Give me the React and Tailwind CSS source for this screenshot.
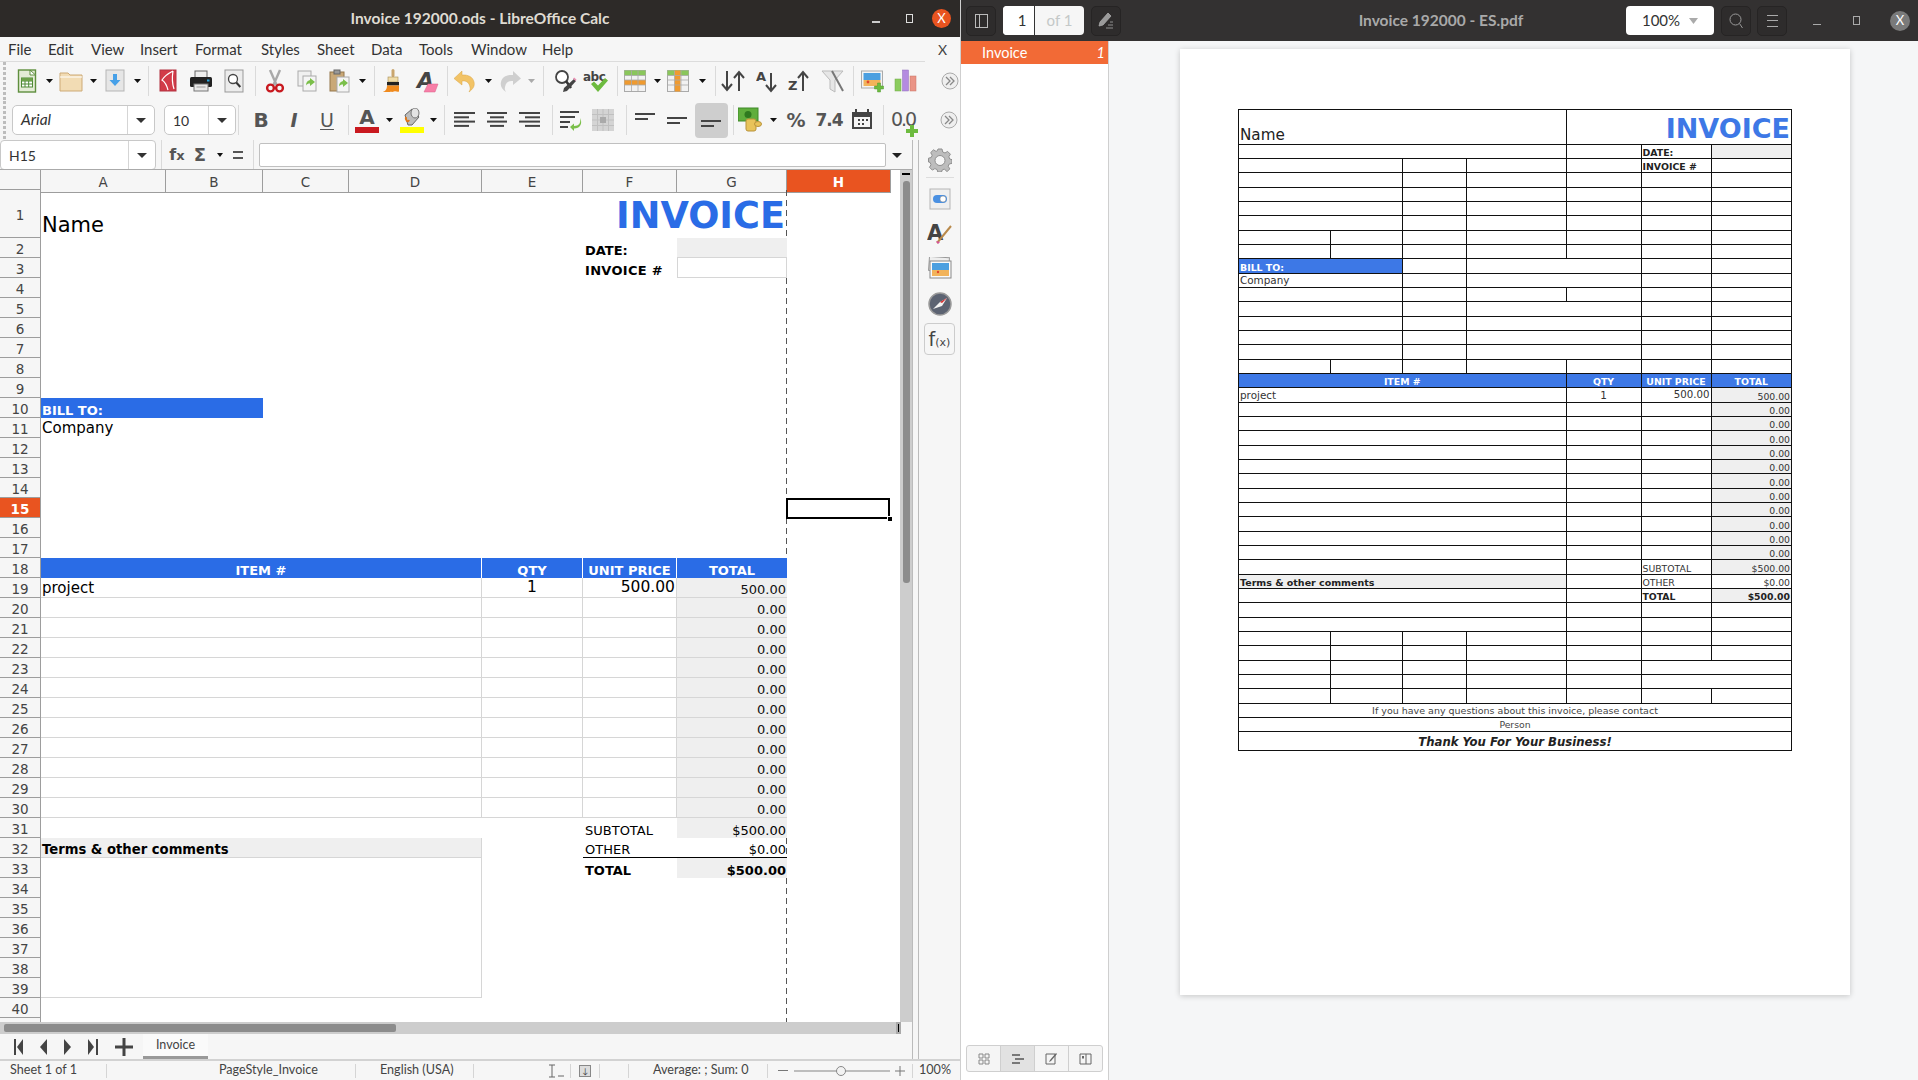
import React from "react";

const S = ({ w, children, className = "" }) => (
  <div className={`${w} shrink-0 flex items-center justify-center ${className}`}>{children}</div>
);
const Sep = ({ w }) => (
  <S w={w}>
    <div className="w-px h-[30px] bg-[#dadada]" />
  </S>
);
const Drop = ({ light }) => (
  <svg width="7" height="4" viewBox="0 0 7 4" className="shrink-0">
    <path d="M0 0h7L3.5 4z" fill={light ? "#aaa" : "#111"} />
  </svg>
);
const DropS = ({ w, light }) => (
  <S w={w}>
    <Drop light={light} />
  </S>
);
const Ic = ({ s = 24, children }) => (
  <svg width={s} height={s} viewBox="0 0 24 24" className="shrink-0">
    {children}
  </svg>
);
const Plus = () => <path d="M16.5 14h3v3h3v3h-3v3h-3v-3h-3v-3h3z" fill="#6dbb3f" stroke="#4f9a2c" strokeWidth=".5" />;

const Grip = () => (
  <div className="flex flex-col gap-[2px]">
    {[0, 1, 2, 3, 4, 5, 6, 7].map((i) => (
      <div key={i} className="w-[3px] h-[3px] bg-[#bdbdbd]" />
    ))}
  </div>
);

const NewCalc = () => (
  <Ic>
    <rect x="3.5" y="1" width="17" height="22" fill="#e4ecd6" stroke="#5f8f3e" strokeWidth="1.4" />
    <path d="M15 1l5.5 5H15z" fill="#fff" stroke="#5f8f3e" />
    <rect x="6.5" y="9" width="11" height="9" fill="#fff" stroke="#4e8a35" />
    <path d="M6.5 12h11M6.5 15h11M10 9v9M13.7 9v9" stroke="#4e8a35" />
    <rect x="6.5" y="9" width="11" height="3" fill="#6ea24b" />
  </Ic>
);
const Folder = () => (
  <Ic>
    <path d="M1 4h8l2 2h12v16H1z" fill="#f2dcb4" stroke="#cdaa76" />
    <path d="M1 8h22" stroke="#fff" />
  </Ic>
);
const Save = () => (
  <Ic>
    <rect x="3" y="1" width="18" height="21" fill="#e6e6e6" stroke="#b5b5b5" />
    <path d="M10 5h4v6h3.5L12 17l-5.5-6H10z" fill="#46a0e8" />
  </Ic>
);
const Pdf = () => (
  <Ic>
    <rect x="4" y="1" width="16" height="21" fill="#d23b48" stroke="#b23340" />
    <path d="M17 2c-4 2-9 6-11 9 3 2 5 6 6 10M17 2c-1 6-1 12 1 18" fill="none" stroke="#fff" strokeWidth="1.2" />
  </Ic>
);
const Printer = () => (
  <Ic>
    <rect x="6" y="2" width="12" height="7" fill="#eee" stroke="#666" />
    <rect x="1" y="8" width="22" height="10" rx="1.5" fill="#222" />
    <rect x="18" y="10.5" width="2.5" height="2" fill="#2aa6e0" />
    <rect x="5" y="15" width="14" height="7" fill="#e8e8e8" stroke="#777" />
    <path d="M7.5 18h9" stroke="#999" />
  </Ic>
);
const Preview = () => (
  <Ic>
    <rect x="3" y="1" width="18" height="22" fill="#ececec" stroke="#999" />
    <circle cx="11" cy="10" r="4.5" fill="#fff" stroke="#444" strokeWidth="1.3" />
    <path d="M14.3 13.5l4 4.5" stroke="#333" strokeWidth="2" />
  </Ic>
);
const Cut = () => (
  <Ic>
    <path d="M7 1l7 16M17 1l-7 16" stroke="#a9a9a9" strokeWidth="2.4" />
    <circle cx="7.5" cy="19" r="3.4" fill="none" stroke="#c8191f" strokeWidth="2.4" />
    <circle cx="16.5" cy="19" r="3.4" fill="none" stroke="#c8191f" strokeWidth="2.4" />
  </Ic>
);
const Clone = () => (
  <Ic>
    <rect x="3" y="2" width="13" height="15" fill="#f0f0f0" stroke="#aaa" />
    <rect x="8" y="7" width="13" height="15" fill="#f5f5f5" stroke="#aaa" />
    <path d="M15 9l5 4-5 4v-2.5c-2 0-3 .5-4 2 0-3 1.500-5 4-5.500z" fill="#7bbf4a" />
  </Ic>
);
const Paste = () => (
  <Ic>
    <rect x="2" y="3" width="14" height="19" fill="#c9a877" stroke="#94764a" />
    <rect x="6" y="1" width="6" height="4" fill="#999" stroke="#666" />
    <rect x="9" y="8" width="12" height="15" fill="#f5f5f5" stroke="#aaa" />
    <path d="M15 10l5 4-5 4v-2.500c-2 0-3 .5-4 2 0-3 1.500-5 4-5.500z" fill="#7bbf4a" />
  </Ic>
);
const Brush = () => (
  <Ic>
    <rect x="10.500" y="0" width="3" height="8" rx="1.500" fill="#c9a56d" />
    <rect x="7" y="8" width="10" height="5" fill="#f0dca8" stroke="#a58a52" strokeWidth=".6" />
    <rect x="6" y="13" width="12" height="3.500" fill="#222" />
    <path d="M6 16.500h12v6c-2 1-3-1-5 0-2 1-3 0-4 .5H2c2-1 4-2 4-6.500z" fill="#f08a1d" />
  </Ic>
);
const Clear = () => (
  <Ic>
    <text x="2" y="19" fontFamily="'DejaVu Sans'" fontWeight="700" fontStyle="italic" fontSize="22" fill="#444">A</text>
    <path d="M13 15h10l-3 8H9z" fill="#f77fa8" stroke="#d8608a" strokeWidth=".5" />
  </Ic>
);
const Undo = ({ c = "#f2c366", e = "#d9a544" }) => (
  <Ic>
    <path d="M9 2L1 9.500 9 16v-4c4-.5 7 1 8 6 .5 2 0 3-1 5 4-3 6-6 5-10-1-5-6-7.500-12-7z" fill={c} stroke={e} strokeWidth=".5" />
  </Ic>
);
const Redo = () => (
  <Ic>
    <path d="M15 2l8 7.500L15 16v-4c-4-.5-7 1-8 6-.5 2 0 3 1 5-4-3-6-6-5-10 1-5 6-7.500 12-7z" fill="#cfcfcf" />
  </Ic>
);
const Find = () => (
  <Ic>
    <circle cx="9" cy="8" r="6" fill="#fff" stroke="#444" strokeWidth="1.8" />
    <path d="M13 12l5 7" stroke="#333" strokeWidth="2.400" />
    <path d="M21 10l2 2-9 10-4 1 1-4z" fill="#444" />
    <path d="M20 9.500l2.500 2.500 1-1.200-2.300-2.300z" fill="#e88bb0" />
  </Ic>
);
const Abc = () => (
  <svg width="28" height="26" viewBox="0 0 28 26" className="shrink-0">
    <text x="0" y="13" fontFamily="'DejaVu Sans'" fontWeight="700" fontSize="12" letterSpacing="-.5" fill="#444">abc</text>
    <path d="M8 16l3-2.500 4 4 7-7.500 3 2.500L15 24z" fill="#6dbb3f" />
  </svg>
);
const Table = ({ col }) => (
  <Ic>
    <rect x="1.500" y="1.500" width="21" height="21" fill="#f2f2f2" stroke="#aaa" />
    <rect x="1.500" y="1.500" width="21" height="5" fill="#8ac65b" />
    {col ? <rect x="8.500" y="1.500" width="6" height="21" fill="#ef9a2f" /> : <rect x="1.500" y="11" width="21" height="5" fill="#ef9a2f" />}
    <path d="M1.500 6.500h21M1.500 11h21M1.500 16h21M8.500 1.500v21M15 1.500v21" stroke="#aaa" strokeWidth=".8" fill="none" />
  </Ic>
);
const Sort = () => (
  <Ic>
    <path d="M6 2v19M1 15l5 6 5-6M18 22V3M13 9l5-6 5 6" fill="none" stroke="#444" strokeWidth="2" />
  </Ic>
);
const Az = () => (
  <Ic>
    <text x="0" y="12" fontFamily="'DejaVu Sans'" fontWeight="700" fontSize="13" fill="#444">A</text>
    <path d="M15 4v18M10 16l5 6 5-6" fill="none" stroke="#444" strokeWidth="2" />
  </Ic>
);
const Za = () => (
  <Ic>
    <text x="0" y="21" fontFamily="'DejaVu Sans'" fontWeight="700" fontSize="13" fill="#444">Z</text>
    <path d="M15 22V3M10 9l5-6 5 6" fill="none" stroke="#444" strokeWidth="2" />
  </Ic>
);
const Filter = () => (
  <Ic>
    <path d="M1 2h21l-8 9v12l-5-3v-9z" fill="#e6e6e6" stroke="#bbb" />
    <path d="M11 2l11 20" stroke="#777" strokeWidth="2" />
  </Ic>
);
const Img = () => (
  <Ic>
    <rect x="0.500" y="2" width="21" height="17" fill="#f4f4f4" stroke="#aaa" />
    <rect x="2.500" y="4" width="17" height="7" fill="#4b9fe0" />
    <rect x="2.500" y="11" width="17" height="6" fill="#f2b35a" />
    <circle cx="7" cy="13" r="1.400" fill="#e2452b" />
    <Plus />
  </Ic>
);
const Chart = () => (
  <Ic>
    <rect x="1" y="10" width="6" height="12" fill="#8ccc5e" stroke="#6fa947" strokeWidth=".5" />
    <rect x="8.500" y="1" width="6" height="21" fill="#b48be0" stroke="#8f6cbb" strokeWidth=".5" />
    <rect x="16" y="7" width="6" height="15" fill="#ea9486" stroke="#c77366" strokeWidth=".5" />
  </Ic>
);
const More = () => (
  <svg width="18" height="18" viewBox="0 0 18 18" className="shrink-0">
    <circle cx="9" cy="9" r="8" fill="#efefef" stroke="#aaa" />
    <path d="M5 5l4 4-4 4M9 5l4 4-4 4" fill="none" stroke="#888" strokeWidth="1.300" />
  </svg>
);
const Lines = ({ a }) => {
  const rows = a === "l" ? [[1, 21], [1, 15], [1, 21], [1, 15]] : a === "c" ? [[2, 20], [5, 14], [2, 20], [5, 14]] : [[1, 21], [7, 15], [1, 21], [7, 15]];
  return (
    <svg width="22" height="16" viewBox="0 0 22 16" className="shrink-0">
      {rows.map((r, i) => (
        <rect key={i} x={r[0] - 1} y={i * 4.300} width={r[1]} height="2" fill="#444" />
      ))}
    </svg>
  );
};
const Wrap = () => (
  <Ic>
    <path d="M1 4h19M1 9h15M1 14h10M1 19h8" stroke="#444" strokeWidth="2" />
    <path d="M21 10c1 5-1 8-6 8v-2.500L11 19l4 4v-2.500c6 0 9-5 6-10.500z" fill="#7bbf4a" />
  </Ic>
);
const Merge = () => (
  <Ic>
    <rect x="1" y="1" width="22" height="22" fill="#d4d4d4" />
    <path d="M1 6.500h22M1 12h22M1 17.500h22M6.500 1v22M12 1v22M17.500 1v22" stroke="#c0c0c0" />
    <rect x="9" y="9" width="6" height="6" fill="#aaa" />
  </Ic>
);
const VAlign = ({ y }) => (
  <svg width="20" height="20" viewBox="0 0 20 20" className="shrink-0">
    <rect x="0" y={y} width="20" height="2" fill="#444" />
    <rect x="0" y={y + 5} width="13" height="2" fill="#444" />
  </svg>
);
const Money = () => (
  <svg width="24" height="26" viewBox="0 0 24 26" className="shrink-0">
    <rect x="0" y="1" width="20" height="13" fill="#5fae3c" stroke="#3f8a28" />
    <circle cx="10" cy="7.500" r="3.500" fill="#2f7a1f" />
    <rect x="8" y="12" width="10" height="12" rx="2" fill="#e8c35a" stroke="#b8923a" />
    <ellipse cx="20" cy="17" rx="3.500" ry="2.500" fill="#e8c35a" stroke="#b8923a" />
  </svg>
);
const Cal = () => (
  <svg width="22" height="22" viewBox="0 0 22 22" className="shrink-0">
    <rect x="1" y="3" width="20" height="17" fill="#444" />
    <rect x="3" y="8" width="16" height="10" fill="#f5f5f5" />
    <path d="M5 0v5M17 0v5" stroke="#444" strokeWidth="2" />
    <path d="M7 11h2M11 11h2M15 11h2M7 15h2M11 15h2" stroke="#444" strokeWidth="2" />
  </svg>
);
const Gear = () => (
  <svg width="24" height="24" viewBox="0 0 24 24" fill="#bdbdbd" stroke="#8f8f8f" className="shrink-0">
    <path d="M10 1h4l.7 3 2.300 1 2.600-1.600 2.800 2.800L20.800 8.800l1 2.200 2.200.7v3.600l-2.800.7-1 2.300 1.600 2.600-2.800 2.800L16.400 21l-2.200 1-.7 2h-3.700l-.7-2.400-2.200-1-2.600 1.500-2.800-2.800 1.500-2.600-1-2.300L.5 14v-3.800l2.700-.7 1-2.300L2.700 4.600l2.800-2.800L8.100 3.400l1.200-.6z" />
    <circle cx="12" cy="12.500" r="5" fill="#f6f6f6" />
  </svg>
);
const Toggle = () => (
  <svg width="22" height="22" viewBox="0 0 22 22" className="shrink-0">
    <rect x="1" y="1" width="20" height="20" fill="#efefef" stroke="#b5b5b5" />
    <rect x="4" y="7" width="14" height="8" rx="4" fill="#4a90e2" />
    <circle cx="14" cy="11" r="3" fill="#fff" stroke="#888" strokeWidth=".5" />
  </svg>
);
const StyleA = () => (
  <svg width="26" height="24" viewBox="0 0 26 24" className="shrink-0">
    <text x="0" y="19" fontFamily="'DejaVu Sans'" fontWeight="700" fontSize="21" fill="#444">A</text>
    <path d="M24 5L10 22" stroke="#b98a4c" strokeWidth="2" />
    <path d="M9 20l4 1-2 2z" fill="#d94da0" />
  </svg>
);
const Gallery = () => (
  <svg width="24" height="22" viewBox="0 0 24 22" className="shrink-0">
    <rect x="1" y="0" width="20" height="14" fill="#eee" stroke="#999" transform="rotate(4 10 7)" />
    <rect x="2" y="4" width="21" height="17" fill="#fafafa" stroke="#888" />
    <rect x="4" y="6" width="17" height="7" fill="#4b9fe0" />
    <rect x="4" y="13" width="17" height="6" fill="#f2b35a" />
    <circle cx="10" cy="15" r="1.200" fill="#e2452b" />
  </svg>
);
const Compass = () => (
  <svg width="24" height="24" viewBox="0 0 24 24" className="shrink-0">
    <circle cx="12" cy="12" r="11" fill="#5c6372" stroke="#9a9a9a" strokeWidth="1.500" />
    <path d="M5 17l7-7 7-4-5 8z" fill="#f2f2f2" />
    <path d="M12 10l7-4-5 5z" fill="#d82b2b" />
  </svg>
);

const Bar = ({ children }) => <div className="flex w-full items-center h-full">{children}</div>;

const Toolbar1 = () => (
  <div className="h-10 shrink-0">
    <Bar>
      <S w="w-[8px]"><Grip /></S>
      <S w="w-[38px]"><NewCalc /></S>
      <DropS w="w-[6px]" />
      <S w="w-[38px]"><Folder /></S>
      <DropS w="w-[6px]" />
      <S w="w-[38px]"><Save /></S>
      <DropS w="w-[6px]" />
      <Sep w="w-[16px]" />
      <S w="w-[24px]"><Pdf /></S>
      <S w="w-[42px]"><Printer /></S>
      <S w="w-[24px]"><Preview /></S>
      <Sep w="w-[18px]" />
      <S w="w-[22px]"><Cut /></S>
      <S w="w-[42px]"><Clone /></S>
      <S w="w-[24px]"><Paste /></S>
      <DropS w="w-[20px]" />
      <Sep w="w-[4px]" />
      <S w="w-[34px]"><Brush /></S>
      <S w="w-[34px]"><Clear /></S>
      <Sep w="w-[6px]" />
      <S w="w-[30px]"><Undo /></S>
      <DropS w="w-[16px]" />
      <S w="w-[28px]"><Redo /></S>
      <DropS w="w-[14px]" light />
      <Sep w="w-[10px]" />
      <S w="w-[34px]"><Find /></S>
      <S w="w-[30px]"><Abc /></S>
      <Sep w="w-[10px]" />
      <S w="w-[26px]"><Table /></S>
      <DropS w="w-[18px]" />
      <S w="w-[24px]"><Table col /></S>
      <DropS w="w-[24px]" />
      <Sep w="w-[2px]" />
      <S w="w-[34px]"><Sort /></S>
      <S w="w-[36px]"><Az /></S>
      <S w="w-[28px]"><Za /></S>
      <S w="w-[38px]"><Filter /></S>
      <Sep w="w-[2px]" />
      <S w="w-[38px]"><Img /></S>
      <S w="w-[28px]"><Chart /></S>
      <S w="w-[41px]" className="justify-end pr-[2px]"><More /></S>
    </Bar>
  </div>
);

const TextIcon = ({ children, className = "" }) => (
  <span className={`font-['DejaVu_Sans',sans-serif] font-bold text-[#555] leading-none ${className}`}>{children}</span>
);

const Combo = ({ w, split, children, italic }) => (
  <div className={`${w} h-[30px] shrink-0 bg-white border border-[#c8c8c8] rounded-[5px] flex items-center text-[#333] ${italic ? "text-[15.5px]" : "text-[14px]"}`}>
    <div className={`flex-1 pl-2 ${italic ? "italic" : ""}`}>{children}</div>
    <div className={`${split} h-full border-l border-[#d5d5d5] flex items-center justify-center`}>
      <svg width="10" height="5" viewBox="0 0 10 5"><path d="M0 0h10L5 5z" fill="#333" /></svg>
    </div>
  </div>
);

const Toolbar2 = () => (
  <div className="h-[39px] shrink-0 pb-[1px]">
    <Bar>
      <S w="w-[8px]"><Grip /></S>
      <div className="w-1 shrink-0" />
      <Combo w="w-[143px]" split="w-[27px]" italic>Arial</Combo>
      <div className="w-[9px] shrink-0" />
      <Combo w="w-[72px]" split="w-[27px]">10</Combo>
      <Sep w="w-[5px]" />
      <S w="w-[40px]"><TextIcon className="text-[20px]">B</TextIcon></S>
      <S w="w-[26px]"><TextIcon className="text-[19px] italic">I</TextIcon></S>
      <S w="w-[40px]"><TextIcon className="text-[19px] font-normal underline underline-offset-2">U</TextIcon></S>
      <Sep w="w-[2px]" />
      <S w="w-[36px]">
        <div className="flex flex-col items-center w-6">
          <TextIcon className="text-[20px] text-[#444]">A</TextIcon>
          <div className="w-6 h-[6px] bg-[#c9191f]" />
        </div>
      </S>
      <DropS w="w-[8px]" />
      <S w="w-[38px]">
        <div className="flex flex-col items-center w-6">
          <svg width="22" height="19" viewBox="0 0 22 19">
            <path d="M4 7l7-6 7 8-7 8H7z" fill="#bdbdbd" stroke="#666" />
            <ellipse cx="14" cy="5" rx="4" ry="5" fill="#e4e4e4" stroke="#777" />
            <path d="M5 9c-1 3 2 6 3 3" stroke="#e0761a" strokeWidth="2" fill="none" />
          </svg>
          <div className="w-6 h-[6px] bg-[#ffff00]" />
        </div>
      </S>
      <DropS w="w-[4px]" />
      <Sep w="w-[18px]" />
      <S w="w-[24px]"><Lines a="l" /></S>
      <S w="w-[40px]"><Lines a="c" /></S>
      <S w="w-[26px]"><Lines a="r" /></S>
      <Sep w="w-[18px]" />
      <S w="w-[20px]"><Wrap /></S>
      <S w="w-[44px]"><Merge /></S>
      <Sep w="w-[2px]" />
      <S w="w-[36px]"><VAlign y={3} /></S>
      <S w="w-[28px]"><VAlign y={7} /></S>
      <S w="w-[40px]">
        <div className="w-[33px] h-[35px] rounded-[4px] bg-[#cecece] flex items-center justify-center">
          <VAlign y={10} />
        </div>
      </S>
      <Sep w="w-[4px]" />
      <S w="w-[30px]"><Money /></S>
      <DropS w="w-[16px]" />
      <S w="w-[30px]"><TextIcon className="text-[19px] text-[#444]">%</TextIcon></S>
      <S w="w-[36px]"><TextIcon className="text-[17px] text-[#444] tracking-[-1px]">7.4</TextIcon></S>
      <S w="w-[30px]"><Cal /></S>
      <Sep w="w-[12px]" />
      <S w="w-[28px]">
        <div className="relative">
          <TextIcon className="text-[19px] font-normal text-[#444] tracking-[-2px]">0.0</TextIcon>
          <svg width="12" height="12" viewBox="0 0 12 12" className="absolute -right-[3px] -bottom-[5px]">
            <path d="M4 0h4v4h4v4H8v4H4V8H0V4h4z" fill="#6dbb3f" />
          </svg>
        </div>
      </S>
      <div className="flex-1 flex justify-end pr-[2px]"><More /></div>
    </Bar>
  </div>
);

const FormulaRow = () => (
  <div className="h-[30px] shrink-0 flex items-center">
    <div className="w-[156px] h-[30px] shrink-0 bg-white border border-[#c8c8c8] rounded-[4px] flex items-center text-[14px] text-[#333]">
      <div className="flex-1 pl-2">H15</div>
      <div className="w-[27px] h-full border-l border-[#d5d5d5] flex items-center justify-center">
        <svg width="10" height="5" viewBox="0 0 10 5"><path d="M0 0h10L5 5z" fill="#333" /></svg>
      </div>
    </div>
    <Sep w="w-[10px]" />
    <S w="w-[22px]"><TextIcon className="text-[16px] text-[#444]">f<span className="text-[13px]">x</span></TextIcon></S>
    <S w="w-[24px]"><TextIcon className="text-[18px] text-[#444]">Σ</TextIcon></S>
    <S w="w-[16px]"><svg width="6" height="4" viewBox="0 0 6 4"><path d="M0 0h6L3 4z" fill="#111" /></svg></S>
    <S w="w-[20px]"><div className="w-[10px] h-[8px] border-y-2 border-[#555]" /></S>
    <Sep w="w-[10px]" />
    <div className="w-[627px] h-6 shrink-0 ml-[1px] bg-white border border-[#c0c0c0] rounded-[2px]" />
    <S w="w-[22px]">
      <svg width="10" height="5" viewBox="0 0 10 5"><path d="M0 0h10L5 5z" fill="#222" /></svg>
    </S>
  </div>
);

const COLS = "grid-cols-[125px_97px_86px_133px_101px_94px_110px_104px]";
const Dj = "font-['DejaVu_Sans',sans-serif]";

const ColHead = ({ on, children }) => (
  <div
    className={`flex items-center justify-center pt-[2px] border-r border-b border-[#9d9d9d] text-[13.5px] ${
      on ? "bg-[#e95420] text-white font-bold" : "bg-[#f6f6f6] text-[#444]"
    }`}
  >
    {children}
  </div>
);

const RowHead = ({ n, tall }) => (
  <div
    className={`w-[41px] shrink-0 flex items-center justify-center pt-[4px] border-r border-b border-[#9d9d9d] text-[13.5px] ${tall ? "h-12" : "h-5"} ${
      n === 15 ? "bg-[#e95420] text-white font-bold" : "bg-[#f6f6f6] text-[#444]"
    }`}
  >
    {n}
  </div>
);

const SheetRow = ({ n, tall, children }) => (
  <div className="flex">
    <RowHead n={n} tall={tall} />
    <div className={`grid ${COLS} w-[850px] text-black ${tall ? "h-12" : "h-5"}`}>{children}</div>
  </div>
);

const Cell = ({ className = "", children }) => (
  <div className={`flex overflow-hidden whitespace-nowrap ${className.includes("items-end") ? "leading-none pb-[1px]" : ""} ${className}`}>{children}</div>
);

const ITEM_ROWS = Array.from({ length: 11 }, (_, i) => i + 20);
const BLANK_A = [4, 5, 6, 7, 8, 9];
const BLANK_B = [12, 13, 14, 15, 16, 17];

const grid = "border-b border-r border-[#d6d6d6]";

const Sheet = () => (
  <div className={`relative h-[852px] w-[901px] bg-white overflow-hidden ${Dj}`}>
    <div className="flex h-5">
      <div className="w-[41px] shrink-0 bg-[#f6f6f6] border-r border-b border-[#9d9d9d]" />
      <div className={`grid ${COLS} w-[850px]`}>
        {["A", "B", "C", "D", "E", "F", "G"].map((c) => (
          <ColHead key={c}>{c}</ColHead>
        ))}
        <ColHead on>H</ColHead>
      </div>
    </div>

    <SheetRow n={1} tall>
      <Cell className="col-span-4 items-end pl-[1px] pb-[2px] text-[21px]">Name</Cell>
      <Cell className="col-span-3 justify-end items-center pt-[5px] pr-[2px] text-[36.7px] font-bold text-[#2a6ce6] leading-none">INVOICE</Cell>
    </SheetRow>
    <SheetRow n={2}>
      <Cell className="col-span-5" />
      <Cell className="items-end pl-[2px] text-[13px] font-bold">DATE:</Cell>
      <Cell className="bg-[#efefef] border-b border-[#d6d6d6]" />
    </SheetRow>
    <SheetRow n={3}>
      <Cell className="col-span-5" />
      <Cell className="items-end pl-[2px] text-[13px] font-bold tracking-[.3px]">INVOICE #</Cell>
      <Cell className="border border-t-0 border-[#d6d6d6]" />
    </SheetRow>
    {BLANK_A.map((n) => (
      <SheetRow key={n} n={n} />
    ))}
    <SheetRow n={10}>
      <Cell className="col-span-2 bg-[#2a6ce6] text-white font-bold text-[13px] items-end pl-[1px]">BILL TO:</Cell>
    </SheetRow>
    <SheetRow n={11}>
      <Cell className="col-span-2 items-center pl-[1px] text-[15px]">Company</Cell>
    </SheetRow>
    {BLANK_B.map((n) => (
      <SheetRow key={n} n={n} />
    ))}
    <SheetRow n={18}>
      <Cell className="col-span-4 bg-[#2a6ce6] text-white font-bold text-[13px] justify-center items-end border-r border-white">ITEM #</Cell>
      <Cell className="bg-[#2a6ce6] text-white font-bold text-[13px] justify-center items-end border-r border-white">QTY</Cell>
      <Cell className="bg-[#2a6ce6] text-white font-bold text-[13px] justify-center items-end border-r border-white">UNIT PRICE</Cell>
      <Cell className="bg-[#2a6ce6] text-white font-bold text-[13px] justify-center items-end">TOTAL</Cell>
    </SheetRow>
    <SheetRow n={19}>
      <Cell className={`col-span-4 items-center pl-[1px] pt-[1px] text-[15px] ${grid}`}>project</Cell>
      <Cell className={`justify-center items-center pt-[1px] text-[15.5px] ${grid}`}>1</Cell>
      <Cell className={`justify-end items-center pr-[1px] pt-[1px] text-[15.5px] ${grid}`}>500.00</Cell>
      <Cell className="justify-end items-end pr-[1px] text-[13px] bg-[#efefef] text-[#111] border-b border-[#d6d6d6]">500.00</Cell>
    </SheetRow>
    {ITEM_ROWS.map((n) => (
      <SheetRow key={n} n={n}>
        <Cell className={`col-span-4 ${grid}`} />
        <Cell className={grid} />
        <Cell className={grid} />
        <Cell className="justify-end items-end pr-[1px] text-[13px] bg-[#efefef] text-[#111] border-b border-[#d6d6d6]">0.00</Cell>
      </SheetRow>
    ))}
    <SheetRow n={31}>
      <Cell className="col-span-5" />
      <Cell className="items-end pl-[2px] text-[13px]">SUBTOTAL</Cell>
      <Cell className="justify-end items-end pr-[1px] text-[13px] bg-[#efefef]">$500.00</Cell>
    </SheetRow>
    <SheetRow n={32}>
      <Cell className="col-span-4 items-end pl-[1px] bg-[#efefef] font-bold text-[13.2px] border-b border-[#d6d6d6] border-r">Terms &amp; other comments</Cell>
      <Cell />
      <Cell className="items-end pl-[2px] text-[13px] border-b border-black">OTHER</Cell>
      <Cell className="justify-end items-end pr-[1px] text-[13px] border-b border-black">$0.00</Cell>
    </SheetRow>
    <SheetRow n={33}>
      <Cell className="col-span-4 border-r border-[#d6d6d6]" />
      <Cell />
      <Cell className="items-end pl-[2px] text-[13px] font-bold">TOTAL</Cell>
      <Cell className="justify-end items-end pr-[1px] text-[13px] font-bold bg-[#efefef]">$500.00</Cell>
    </SheetRow>
    {[34, 35, 36, 37, 38].map((n) => (
      <SheetRow key={n} n={n}>
        <Cell className="col-span-4 border-r border-[#d6d6d6]" />
      </SheetRow>
    ))}
    <SheetRow n={39}>
      <Cell className="col-span-4 border-r border-b border-[#d6d6d6]" />
    </SheetRow>
    <SheetRow n={40} />
    <SheetRow />

    <div className="absolute left-[786px] top-5 w-px h-12 bg-[repeating-linear-gradient(to_bottom,#555_0,#555_6px,transparent_6px,transparent_10px)]" />
    <div className="absolute left-[786px] top-[108px] w-px h-[280px] bg-[repeating-linear-gradient(to_bottom,#555_0,#555_6px,transparent_6px,transparent_10px)]" />
    <div className="absolute left-[786px] top-[668px] w-px h-5 bg-[repeating-linear-gradient(to_bottom,#555_0,#555_6px,transparent_6px,transparent_10px)]" />
    <div className="absolute left-[786px] top-[708px] w-px h-[144px] bg-[repeating-linear-gradient(to_bottom,#555_0,#555_6px,transparent_6px,transparent_10px)]" />
    <div className="absolute left-[786px] top-[328px] w-[104px] h-[21px] border-2 border-black" />
    <div className="absolute left-[887px] top-[346px] w-[6px] h-[6px] bg-black border border-white" />
  </div>
);

const VScroll = () => (
  <div className="w-3 h-[852px] bg-[#cdcdcd] flex flex-col items-center">
    <div className="w-2 h-[2px] bg-black mt-[3px]" />
    <div className="w-[7px] h-[402px] bg-[#8c8c8c] rounded-[3px] mt-[6px]" />
  </div>
);

const NavTri = ({ d }) => (
  <svg width="10" height="16" viewBox="0 0 10 16" className="shrink-0">
    <path d={d} fill="#444" />
  </svg>
);

const SheetTabs = () => (
  <div className="h-[25px] shrink-0 flex items-center text-[12.5px] text-[#444]">
    <S w="w-[37px]"><NavTri d="M0 0h2v16H0zM9 0v16L3 8z" /></S>
    <S w="w-[14px]"><NavTri d="M8 0v16L1 8z" /></S>
    <S w="w-[34px]"><NavTri d="M1 0v16l7-8z" /></S>
    <S w="w-[16px]"><NavTri d="M8 0h2v16H8zM0 0v16l6-8z" /></S>
    <S w="w-[40px]" className="pl-[6px]">
      <svg width="18" height="18" viewBox="0 0 18 18"><path d="M7.500 0h3v7.500H18v3h-7.500V18h-3v-7.500H0v-3h7.500z" fill="#444" /></svg>
    </S>
    <div className="w-[65px] h-full ml-[2px] bg-[#fafafa] flex items-center justify-center border-b-[3px] border-[#999] font-['Lato',sans-serif] text-[#444]">
      Invoice
    </div>
  </div>
);

const SideBar = () => (
  <div className="w-12 shrink-0 flex border-l border-[#bbb]">
    <div className="w-[6px] shrink-0 border-r border-[#bbb]" />
    <div className="flex-1 flex flex-col items-center pt-2">
      <div className="h-6 flex items-center"><Gear /></div>
      <div className="w-[28px] h-px bg-[#ddd] mt-[5px]" />
      <div className="h-[22px] mt-[10px] flex items-center"><Toggle /></div>
      <div className="h-6 mt-[11px] flex items-center"><StyleA /></div>
      <div className="h-[22px] mt-[12px] flex items-center"><Gallery /></div>
      <div className="h-6 mt-[13px] flex items-center"><Compass /></div>
      <div className="w-[31px] h-[32px] mt-[7px] border border-[#ccc] rounded-[4px] flex items-center justify-center text-[#444] font-['DejaVu_Sans',sans-serif] text-[19px] leading-none">
        f<span className="text-[11px] mt-[6px]">(x)</span>
      </div>
    </div>
  </div>
);

const StatusSep = ({ w }) => (
  <S w={w}>
    <div className="w-px h-[14px] bg-[#d5d5d5]" />
  </S>
);

const StatusBar = () => (
  <div className="h-[21px] shrink-0 border-t-2 border-[#d2d2d2] flex items-center text-[12.6px] text-[#444] whitespace-nowrap">
    <div className="w-[106px] shrink-0 pl-[10px]">Sheet 1 of 1</div>
    <StatusSep w="w-px" />
    <div className="w-[112px] shrink-0" />
    <div className="w-[136px] shrink-0">PageStyle_Invoice</div>
    <StatusSep w="w-px" />
    <div className="w-[24px] shrink-0" />
    <div className="w-[93px] shrink-0">English (USA)</div>
    <StatusSep w="w-px" />
    <div className="w-[74px] shrink-0" />
    <svg width="16" height="14" viewBox="0 0 16 14" className="shrink-0"><path d="M1 1h6M4 1v12M1 13h6M10 12h6" stroke="#666" fill="none" /></svg>
    <div className="w-[6px] shrink-0" />
    <StatusSep w="w-px" />
    <div className="w-[8px] shrink-0" />
    <div className="w-3 h-3 shrink-0 border border-[#888] bg-[#ddd] flex items-center justify-center text-[8px] leading-none">↓</div>
    <div className="w-[8px] shrink-0" />
    <StatusSep w="w-px" />
    <div className="w-[28px] shrink-0" />
    <StatusSep w="w-px" />
    <div className="w-[24px] shrink-0" />
    <div className="w-[114px] shrink-0">Average: ; Sum: 0</div>
    <StatusSep w="w-px" />
    <div className="w-[10px] shrink-0" />
    <div className="w-[10px] h-px bg-[#777] shrink-0" />
    <div className="w-[6px] shrink-0" />
    <div className="relative w-[96px] h-[2px] bg-[#bdbdbd] shrink-0 ">
      <div className="absolute left-[42px] -top-[4px] w-[10px] h-[10px] rounded-full bg-[#f2f2f2] border border-[#888]" />
    </div>
    <div className="w-[5px] shrink-0" />
    <svg width="10" height="10" viewBox="0 0 10 10" className="shrink-0"><path d="M5 0v10M0 5h10" stroke="#777" /></svg>
    <div className="w-[7px] shrink-0" />
    <StatusSep w="w-px" />
    <div className="pl-[6px]">100%</div>
  </div>
);

const MENU = [
  ["File", "w-[40px]"],
  ["Edit", "w-[43px]"],
  ["View", "w-[49px]"],
  ["Insert", "w-[55px]"],
  ["Format", "w-[66px]"],
  ["Styles", "w-[56px]"],
  ["Sheet", "w-[54px]"],
  ["Data", "w-[48px]"],
  ["Tools", "w-[52px]"],
  ["Window", "w-[71px]"],
  ["Help", "w-[50px]"],
];

const Calc = () => (
  <div className="w-[961px] h-[1080px] shrink-0 flex flex-col bg-[#f6f6f6] border-r border-[#cfcfcf] font-['Lato',sans-serif]">
    <div className="h-[37px] shrink-0 bg-[#2d2a28] flex items-center">
      <div className="flex-1 text-center pl-[88px] text-[15.5px] font-bold text-[#dfdbd2]">Invoice 192000.ods - LibreOffice Calc</div>
      <div className="w-[79px] flex items-center text-[#ddd]">
        <div className="w-2 h-[2px] bg-[#ccc] mt-[6px]" />
        <div className="w-[7px] h-[9px] border border-[#ddd] ml-[26px]" />
        <div className="w-[19px] h-[19px] rounded-full bg-[#e95420] ml-[19px] flex items-center justify-center text-[13px] text-white">X</div>
      </div>
      <div className="w-[9px]" />
    </div>
    <div className="h-6 shrink-0 flex items-center pl-2 text-[15px] text-[#333]">
      {MENU.map(([t, w]) => (
        <div key={t} className={`${w} shrink-0`}>{t}</div>
      ))}
      <div className="ml-[346px] text-[#444] text-[14px]">X</div>
    </div>
    <div className="h-px w-[925px] bg-[#dcdcdc] -mb-px shrink-0" />
    <Toolbar1 />
    <Toolbar2 />
    <div className="flex-1 min-h-0 flex">
      <div className="w-[912px] shrink-0 flex flex-col">
        <FormulaRow />
        <div className="flex border-t border-[#aaa] -mt-px">
          <Sheet />
          <VScroll />
        </div>
        <div className="h-3 w-[901px] shrink-0 bg-[#cdcdcd] flex items-center justify-between pl-1">
          <div className="w-[392px] h-2 bg-[#8c8c8c] rounded-[2px]" />
          <div className="w-[5px] h-full bg-[#aaa] flex items-center justify-center"><div className="w-px h-2 bg-black" /></div>
        </div>
        <SheetTabs />
      </div>
      <SideBar />
    </div>
    <StatusBar />
  </div>
);

const DarkBtn = ({ w, children }) => (
  <div className={`${w} h-[30px] shrink-0 rounded-[5px] bg-[#2e2c2c] border border-[#262424] flex items-center justify-center`}>{children}</div>
);

const G = ["col-span-1", "col-span-1", "col-span-2", "col-span-3", "col-span-4", "col-span-5", "col-span-6", "col-span-7"];
const specs = (r) => {
  if (r === 2) return [4, 1, 1, 1];
  if (r >= 3 && r <= 7) return [2, 1, 1, 1, 1, 1];
  if (r === 8 || r === 9 || r === 17 || r === 36 || r === 37 || r === 40) return [1, 1, 1, 1, 1, 1, 1];
  if (r === 10 || r === 11 || (r >= 13 && r <= 16)) return [2, 1, 2, 1, 1];
  if (r === 12) return [2, 1, 1, 1, 1, 1];
  if (r === 38 || r === 39) return [1, 1, 1, 1, 1, 2];
  if (r >= 41) return [7];
  return [4, 1, 1, 1];
};
const LBL = "items-end pb-[1px] pl-[1px] text-[9.4px] font-bold text-[#222]";
const SUM = "justify-end items-end pb-[1px] pr-[1px] text-[9.3px] text-[#333]";
const HD = "justify-center items-end pb-[1px] bg-[#3d78e6] text-white font-bold text-[9.4px]";
const content = {
  "2-2": [LBL, "DATE:"],
  "2-3": ["bg-[#efefef]", ""],
  "3-4": [LBL, "INVOICE #"],
  "10-0": ["items-end pb-[1px] pl-[1px] bg-[#3d78e6] text-white font-bold text-[9.4px]", "BILL TO:"],
  "11-0": ["items-center pl-[1px] text-[10.4px] text-[#333]", "Company"],
  "18-0": [HD, "ITEM #"],
  "18-1": [HD, "QTY"],
  "18-2": [HD, "UNIT PRICE"],
  "18-3": [HD, "TOTAL"],
  "19-0": ["items-center pl-[1px] text-[10.4px] text-[#333]", "project"],
  "19-1": ["justify-center items-center text-[10.4px] text-[#333]", "1"],
  "19-2": ["justify-end items-center pr-[1px] text-[10.2px] text-[#333]", "500.00"],
  "19-3": [`${SUM} bg-[#efefef]`, "500.00"],
  "31-2": ["items-end pb-[1px] pl-[1px] text-[9.3px] text-[#333]", "SUBTOTAL"],
  "31-3": [`${SUM} bg-[#efefef]`, "$500.00"],
  "32-0": ["items-end pb-[1px] pl-[1px] bg-[#efefef] font-bold text-[9.5px] text-[#222]", "Terms & other comments"],
  "32-2": ["items-end pb-[1px] pl-[1px] text-[9.3px] text-[#333]", "OTHER"],
  "32-3": [SUM, "$0.00"],
  "33-2": ["items-end pb-[1px] pl-[1px] text-[9.3px] font-bold text-[#222]", "TOTAL"],
  "33-3": ["justify-end items-end pb-[1px] pr-[1px] text-[9.3px] font-bold text-[#222] bg-[#efefef]", "$500.00"],
  "41-0": ["justify-center items-center text-[9.5px] text-[#444]", "If you have any questions about this invoice, please contact"],
  "42-0": ["justify-center items-center pt-[1px] text-[9.3px] text-[#444]", "Person"],
  "43-0": ["justify-center items-center pt-[3px] text-[11.7px] font-bold italic text-[#222]", "Thank You For Your Business!"],
};
for (let r = 20; r <= 30; r++) content[`${r}-3`] = [`${SUM} bg-[#efefef]`, "0.00"];

const PCOLS = "grid-cols-[92px_72px_64px_99.5px_75px_70px_79.5px]";
const PDF_ROWS = Array.from({ length: 42 }, (_, i) => i + 2);
const rowH = (r) => (r === 43 ? "h-[18px]" : (r - 2) % 3 === 2 ? "h-[15px]" : "h-[14px]");

const PdfTable = () => (
  <div className={`w-[554px] border border-[#111] ${Dj}`}>
    <div className={`grid ${PCOLS} h-[35px] border-b border-[#111]`}>
      <div className="col-span-4 border-r border-[#111] flex items-end pl-[1px] text-[15.2px] text-[#222] leading-[18px]">Name</div>
      <div className="col-span-3 flex items-center justify-end pt-[2px] pr-[1px] text-[27px] font-bold text-[#3d78e6] leading-none">INVOICE</div>
    </div>
    {PDF_ROWS.map((r) => (
      <div key={r} className={`grid ${PCOLS} ${rowH(r)} ${r === 43 ? "" : "border-b border-[#111]"}`}>
        {specs(r).map((n, i) => {
          const c = content[`${r}-${i}`] || ["", ""];
          return (
            <div key={i} className={`${G[n]} flex overflow-hidden whitespace-nowrap leading-none border-r border-[#111] last:border-r-0 ${c[0]}`}>
              {c[1]}
            </div>
          );
        })}
      </div>
    ))}
  </div>
);

const Evince = () => (
  <div className="flex-1 h-[1080px] flex flex-col font-['Lato',sans-serif] min-w-0">
    <div className="h-[41px] shrink-0 bg-[#333131] flex items-center pl-[5px]">
      <DarkBtn w="w-[30px]">
        <div className="w-[13px] h-[14px] border border-[#bbb] flex"><div className="w-[4px] border-r border-[#bbb]" /></div>
      </DarkBtn>
      <div className="w-[81px] h-[29px] ml-[7px] shrink-0 rounded-[4px] bg-[#f6f6f6] flex text-[15px] text-[#333]">
        <div className="w-[32px] h-full bg-white rounded-l-[4px] border-r border-[#333] flex items-center justify-center pl-[7px]">1</div>
        <div className="flex-1 flex items-center justify-center text-[#c4c8c8]">of 1</div>
      </div>
      <div className="w-[7px] shrink-0" />
      <DarkBtn w="w-[30px]">
        <svg width="16" height="18" viewBox="0 0 16 18"><path d="M10 1l3 3-8 9-4 1 1-4zM8 16h7M10 13h5M12 10h3" stroke="#aaa" fill="#9a9a9a" strokeWidth=".8" /></svg>
      </DarkBtn>
      <div className="flex-1 text-center pl-[135px] text-[15.5px] font-bold text-[#a9a9a9]">Invoice 192000 - ES.pdf</div>
      <div className="w-[88px] h-[29px] shrink-0 rounded-[4px] bg-white flex items-center justify-center gap-[9px] text-[15px] text-[#333]">
        100%
        <svg width="9" height="6" viewBox="0 0 9 6"><path d="M0 0h9L4.500 6z" fill="#aaa" /></svg>
      </div>
      <div className="w-[7px] shrink-0" />
      <DarkBtn w="w-[30px]">
        <svg width="16" height="18" viewBox="0 0 16 18" fill="none"><circle cx="7.500" cy="7.500" r="5.500" stroke="#999" /><path d="M11.500 11.500l3 4.500" stroke="#999" /></svg>
      </DarkBtn>
      <div className="w-[6px] shrink-0" />
      <DarkBtn w="w-[30px]">
        <div className="w-[11px] h-[12px] border-y border-[#aaa] flex items-center"><div className="w-full h-px bg-[#aaa]" /></div>
      </DarkBtn>
      <div className="w-[26px] shrink-0" />
      <div className="w-2 h-px mt-[8px] bg-[#aaa] shrink-0" />
      <div className="w-[7px] h-[9px] ml-[32px] shrink-0 border border-[#aaa]" />
      <div className="w-5 h-5 ml-[30px] shrink-0 rounded-full bg-[#7a7a7a] flex items-center justify-center text-[13px] text-white">X</div>
      <div className="w-[8px] shrink-0" />
    </div>
    <div className="flex-1 min-h-0 flex bg-[#f5f6f7]">
      <div className="w-[148px] shrink-0 bg-white border-r border-[#cfcfcf] flex flex-col">
        <div className="h-[23px] shrink-0 bg-[#f26a36] flex items-center justify-between pl-[21px] pr-[3px] text-[14.5px] text-white">
          <span>Invoice</span>
          <span className="italic">1</span>
        </div>
        <div className="flex-1" />
        <div className="h-[27px] mx-[5px] mb-[8px] rounded-[3px] border border-[#cfcfcf] flex bg-[#f5f5f5]">
          <div className="flex-1 flex items-center justify-center border-r border-[#cfcfcf]">
            <svg width="12" height="12" viewBox="0 0 12 12"><path d="M1 1h4v4H1zM7 1h4v4H7zM1 7h4v4H1zM7 7h4v4H7z" fill="none" stroke="#888" /></svg>
          </div>
          <div className="flex-1 flex items-center justify-center border-r border-[#cfcfcf] bg-[#e2e2e2]">
            <svg width="12" height="10" viewBox="0 0 12 10"><path d="M0 1h8M3 5h9M0 9h8" stroke="#555" strokeWidth="1.300" /></svg>
          </div>
          <div className="flex-1 flex items-center justify-center border-r border-[#cfcfcf]">
            <svg width="13" height="13" viewBox="0 0 13 13"><path d="M1 2h9v10H1z" fill="none" stroke="#666" /><path d="M11 1L5 8l-1 2 2-1 6-7z" fill="#666" /></svg>
          </div>
          <div className="flex-1 flex items-center justify-center">
            <svg width="13" height="13" viewBox="0 0 13 13"><path d="M1 2h11v10H1zM7 2v10" fill="none" stroke="#666" /><path d="M3 4h2v3L4 6 3 7z" fill="#666" /></svg>
          </div>
        </div>
      </div>
      <div className="flex-1 min-w-0 pl-[71px] pt-2">
        <div className="w-[670px] h-[946px] bg-white shadow-[0_1px_6px_rgba(0,0,0,0.2)] pl-[58px] pt-[60px]">
          <PdfTable />
        </div>
      </div>
    </div>
  </div>
);

export default function App() {
  return (
    <div className="w-[1918px] h-[1080px] flex overflow-hidden">
      <Calc />
      <Evince />
    </div>
  );
}
